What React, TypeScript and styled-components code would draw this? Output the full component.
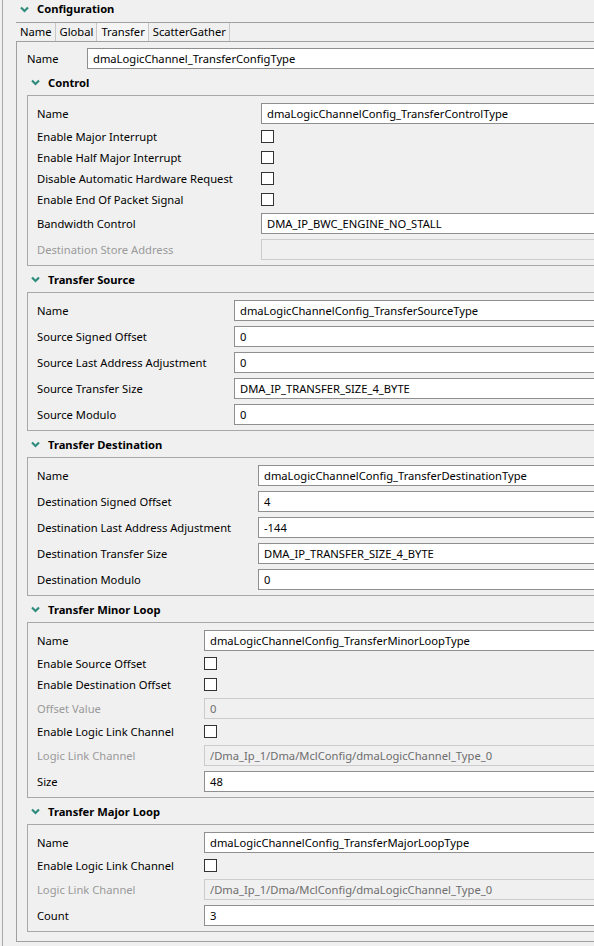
import React from "react";
import styled, { createGlobalStyle } from "styled-components";

const GlobalStyle = createGlobalStyle`
  html, body {
    margin: 0;
    padding: 0;
    background: #f0f0f0;
    overflow: hidden;
  }
  body {
    font-family: "Noto Sans", "Open Sans", sans-serif;
    font-size: 11.2px;
    color: #000;
  }
`;

type Field =
  | { kind: "text"; label: string; value: string; disabled?: boolean }
  | { kind: "check"; label: string };

type Section = { title: string; labelWidth: number; fields: Field[] };

const sections: Section[] = [
  {
    title: "Control",
    labelWidth: 224,
    fields: [
      { kind: "text", label: "Name", value: "dmaLogicChannelConfig_TransferControlType" },
      { kind: "check", label: "Enable Major Interrupt" },
      { kind: "check", label: "Enable Half Major Interrupt" },
      { kind: "check", label: "Disable Automatic Hardware Request" },
      { kind: "check", label: "Enable End Of Packet Signal" },
      { kind: "text", label: "Bandwidth Control", value: "DMA_IP_BWC_ENGINE_NO_STALL" },
      { kind: "text", label: "Destination Store Address", value: "", disabled: true },
    ],
  },
  {
    title: "Transfer Source",
    labelWidth: 197,
    fields: [
      { kind: "text", label: "Name", value: "dmaLogicChannelConfig_TransferSourceType" },
      { kind: "text", label: "Source Signed Offset", value: "0" },
      { kind: "text", label: "Source Last Address Adjustment", value: "0" },
      { kind: "text", label: "Source Transfer Size", value: "DMA_IP_TRANSFER_SIZE_4_BYTE" },
      { kind: "text", label: "Source Modulo", value: "0" },
    ],
  },
  {
    title: "Transfer Destination",
    labelWidth: 221,
    fields: [
      { kind: "text", label: "Name", value: "dmaLogicChannelConfig_TransferDestinationType" },
      { kind: "text", label: "Destination Signed Offset", value: "4" },
      { kind: "text", label: "Destination Last Address Adjustment", value: "-144" },
      { kind: "text", label: "Destination Transfer Size", value: "DMA_IP_TRANSFER_SIZE_4_BYTE" },
      { kind: "text", label: "Destination Modulo", value: "0" },
    ],
  },
  {
    title: "Transfer Minor Loop",
    labelWidth: 167,
    fields: [
      { kind: "text", label: "Name", value: "dmaLogicChannelConfig_TransferMinorLoopType" },
      { kind: "check", label: "Enable Source Offset" },
      { kind: "check", label: "Enable Destination Offset" },
      { kind: "text", label: "Offset Value", value: "0", disabled: true },
      { kind: "check", label: "Enable Logic Link Channel" },
      {
        kind: "text",
        label: "Logic Link Channel",
        value: "/Dma_Ip_1/Dma/MclConfig/dmaLogicChannel_Type_0",
        disabled: true,
      },
      { kind: "text", label: "Size", value: "48" },
    ],
  },
  {
    title: "Transfer Major Loop",
    labelWidth: 167,
    fields: [
      { kind: "text", label: "Name", value: "dmaLogicChannelConfig_TransferMajorLoopType" },
      { kind: "check", label: "Enable Logic Link Channel" },
      {
        kind: "text",
        label: "Logic Link Channel",
        value: "/Dma_Ip_1/Dma/MclConfig/dmaLogicChannel_Type_0",
        disabled: true,
      },
      { kind: "text", label: "Count", value: "3" },
    ],
  },
];

const tabs = ["Name", "Global", "Transfer", "ScatterGather"];

const Chevron = () => (
  <ChevronSvg width="9" height="7" viewBox="0 0 9 7">
    <polyline points="1,1.5 4.5,5 8,1.5" fill="none" stroke="#2f8c7d" strokeWidth="2.2" />
  </ChevronSvg>
);

export default function App() {
  return (
    <>
      <GlobalStyle />
      <Page>
        <TopHeader>
          <Chevron />
          <HeaderTitle>Configuration</HeaderTitle>
        </TopHeader>
        <TabFolder>
          <TabStrip>
            {tabs.map((t) => (
              <Tab key={t} $active={t === "Transfer"}>
                {t}
              </Tab>
            ))}
          </TabStrip>
          <TabBody>
            <NameRow>
              <NameLabel>Name</NameLabel>
              <TextField>dmaLogicChannel_TransferConfigType</TextField>
            </NameRow>
            {sections.map((s) => (
              <React.Fragment key={s.title}>
                <SectionHeader>
                  <Chevron />
                  <SectionTitle>{s.title}</SectionTitle>
                </SectionHeader>
                <Box $labelWidth={s.labelWidth}>
                  {s.fields.map((f, i) => (
                    <React.Fragment key={i}>
                      <Label $disabled={f.kind === "text" && !!f.disabled}>{f.label}</Label>
                      {f.kind === "text" ? (
                        <Cell $h={26}>
                          <TextField $disabled={f.disabled}>{f.value}</TextField>
                        </Cell>
                      ) : (
                        <Cell $h={21}>
                          <CheckBox />
                        </Cell>
                      )}
                    </React.Fragment>
                  ))}
                </Box>
              </React.Fragment>
            ))}
          </TabBody>
        </TabFolder>
      </Page>
    </>
  );
}

const Page = styled.div`
  width: 640px;
  height: 946px;
  margin-left: 2px;
  border-left: 1px solid #a9a9a9;
  box-sizing: border-box;
`;

const TopHeader = styled.div`
  height: 18px;
  display: flex;
  align-items: center;
  padding-left: 17px;
  gap: 8px;
`;

const ChevronSvg = styled.svg`
  display: block;
  flex: none;
`;

const HeaderTitle = styled.span`
  font-weight: 700;
  line-height: 16px;
`;

const TabFolder = styled.div`
  margin-left: 13px;
  border-left: 1px solid #a0a0a0;
  border-bottom: 1px solid #a0a0a0;
  margin-top: 4px;
`;

const TabStrip = styled.div`
  display: flex;
  height: 18px;
  border-top: 1px solid #a0a0a0;
  border-bottom: 1px solid #a0a0a0;
  margin-left: -1px;
`;

const Tab = styled.div<{ $active?: boolean }>`
  display: flex;
  align-items: center;
  padding: 0 3px 0 4px;
  border-right: 1px solid #c8c8c8;
  background: ${(p) => (p.$active ? "#f5f5f5" : "#f0f0f0")};
  line-height: 16px;
`;

const TabBody = styled.div`
  padding: 6px 0 9px 10px;
`;

const NameRow = styled.div`
  display: flex;
  align-items: center;
  height: 21px;
`;

const NameLabel = styled.span`
  width: 60px;
  flex: none;
`;

const SectionHeader = styled.div`
  height: 26px;
  display: flex;
  align-items: center;
  gap: 8px;
  padding-left: 4px;
`;

const SectionTitle = styled.span`
  font-weight: 700;
`;

const Box = styled.div<{ $labelWidth: number }>`
  display: grid;
  grid-template-columns: ${(p) => p.$labelWidth}px 1fr;
  border: 1px solid #a8a8a8;
  border-right: none;
  padding: 4px 0 3px 9px;
`;

const Label = styled.span<{ $disabled?: boolean }>`
  align-self: center;
  color: ${(p) => (p.$disabled ? "#9a9a9a" : "#000")};
  white-space: nowrap;
`;

const Cell = styled.div<{ $h: number }>`
  height: ${(p) => p.$h}px;
  display: flex;
  align-items: center;
`;

const TextField = styled.div<{ $disabled?: boolean }>`
  flex: 1;
  height: 21px;
  box-sizing: border-box;
  display: flex;
  align-items: center;
  padding-left: 5px;
  border: 1px solid ${(p) => (p.$disabled ? "#cccccc" : "#8f8f8f")};
  border-right: none;
  background: ${(p) => (p.$disabled ? "#f0f0f0" : "#ffffff")};
  color: ${(p) => (p.$disabled ? "#6d6d6d" : "#000")};
  white-space: nowrap;
`;

const CheckBox = styled.span`
  width: 13px;
  height: 13px;
  box-sizing: border-box;
  border: 1px solid #333;
  background: #fff;
  display: block;
`;
